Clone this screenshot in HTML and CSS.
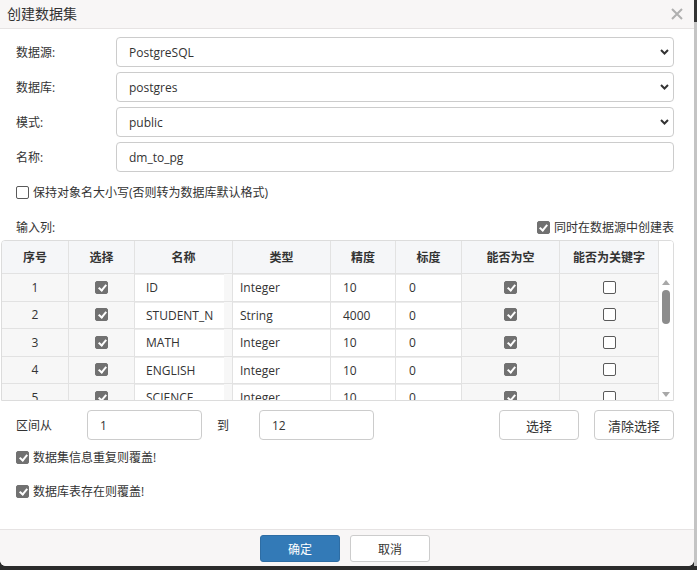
FILE: index.html
```html
<!DOCTYPE html>
<html lang="zh-CN">
<head>
<meta charset="utf-8">
<title>创建数据集</title>
<link rel="stylesheet" href="styles.css">
</head>
<body>
<div class="screen">
  <div class="dialog">
    <div class="dlg-header">
      <span class="title">创建数据集</span>
      <span class="close"><svg width="12" height="12" viewBox="0 0 12 12"><path d="M1 1L11 11M11 1L1 11" stroke="#b0b0b0" stroke-width="2" fill="none"/></svg></span>
    </div>
    <div class="dlg-body">
      <div class="form-row"><span class="lbl">数据源:</span><div class="select"><span>PostgreSQL</span><svg class="chev" width="9" height="6" viewBox="0 0 9 6"><path d="M1 1L4.5 4.5L8 1" stroke="#333" stroke-width="2" fill="none"/></svg></div></div>
      <div class="form-row"><span class="lbl">数据库:</span><div class="select"><span>postgres</span><svg class="chev" width="9" height="6" viewBox="0 0 9 6"><path d="M1 1L4.5 4.5L8 1" stroke="#333" stroke-width="2" fill="none"/></svg></div></div>
      <div class="form-row"><span class="lbl">模式:</span><div class="select"><span>public</span><svg class="chev" width="9" height="6" viewBox="0 0 9 6"><path d="M1 1L4.5 4.5L8 1" stroke="#333" stroke-width="2" fill="none"/></svg></div></div>
      <div class="form-row"><span class="lbl">名称:</span><div class="select"><span>dm_to_pg</span></div></div>

      <div class="check-line keep"><span class="cb"></span><span>保持对象名大小写(否则转为数据库默认格式)</span></div>

      <div class="cols-bar">
        <span>输入列:</span>
        <div class="check-line inline"><span class="cb on"></span><span>同时在数据源中创建表</span></div>
      </div>

      <div class="tbl">
        <div class="tbl-main">
          <div class="row head">
            <div class="c c1">序号</div><div class="c c2">选择</div><div class="c c3">名称</div><div class="c c4">类型</div><div class="c c5">精度</div><div class="c c6">标度</div><div class="c c7">能否为空</div><div class="c c8">能否为关键字</div>
          </div>
          <div class="tbody">
            <div class="row">
              <div class="c c1">1</div><div class="c c2"><span class="cb on"></span></div>
              <div class="c c3"><div class="inp name"><span class="clip">ID</span></div></div><div class="c c4"><div class="inp t">Integer</div></div>
              <div class="c c5"><div class="inp p">10</div></div><div class="c c6"><div class="inp s">0</div></div>
              <div class="c c7"><span class="cb on"></span></div><div class="c c8"><span class="cb"></span></div>
            </div>
            <div class="row">
              <div class="c c1">2</div><div class="c c2"><span class="cb on"></span></div>
              <div class="c c3"><div class="inp name"><span class="clip">STUDENT_NAME</span></div></div><div class="c c4"><div class="inp t">String</div></div>
              <div class="c c5"><div class="inp p">4000</div></div><div class="c c6"><div class="inp s">0</div></div>
              <div class="c c7"><span class="cb on"></span></div><div class="c c8"><span class="cb"></span></div>
            </div>
            <div class="row">
              <div class="c c1">3</div><div class="c c2"><span class="cb on"></span></div>
              <div class="c c3"><div class="inp name"><span class="clip">MATH</span></div></div><div class="c c4"><div class="inp t">Integer</div></div>
              <div class="c c5"><div class="inp p">10</div></div><div class="c c6"><div class="inp s">0</div></div>
              <div class="c c7"><span class="cb on"></span></div><div class="c c8"><span class="cb"></span></div>
            </div>
            <div class="row">
              <div class="c c1">4</div><div class="c c2"><span class="cb on"></span></div>
              <div class="c c3"><div class="inp name"><span class="clip">ENGLISH</span></div></div><div class="c c4"><div class="inp t">Integer</div></div>
              <div class="c c5"><div class="inp p">10</div></div><div class="c c6"><div class="inp s">0</div></div>
              <div class="c c7"><span class="cb on"></span></div><div class="c c8"><span class="cb"></span></div>
            </div>
            <div class="row">
              <div class="c c1">5</div><div class="c c2"><span class="cb on"></span></div>
              <div class="c c3"><div class="inp name"><span class="clip">SCIENCE</span></div></div><div class="c c4"><div class="inp t">Integer</div></div>
              <div class="c c5"><div class="inp p">10</div></div><div class="c c6"><div class="inp s">0</div></div>
              <div class="c c7"><span class="cb on"></span></div><div class="c c8"><span class="cb"></span></div>
            </div>
          </div>
        </div>
        <div class="scroll">
          <div class="sb-track">
            <svg class="arr" width="8" height="5" viewBox="0 0 8 5"><path d="M0 5L4 0L8 5Z" fill="#a8a8a8"/></svg>
            <div class="thumb"></div>
            <div class="sb-fill"></div>
            <svg class="arr" width="8" height="5" viewBox="0 0 8 5"><path d="M0 0L4 5L8 0Z" fill="#a8a8a8"/></svg>
          </div>
        </div>
      </div>

      <div class="range-row">
        <span class="rlbl">区间从</span>
        <div class="box">1</div>
        <span class="to">到</span>
        <div class="box">12</div>
        <span class="btn-sm first">选择</span>
        <span class="btn-sm">清除选择</span>
      </div>

      <div class="check-line over1"><span class="cb on"></span><span>数据集信息重复则覆盖!</span></div>
      <div class="check-line over2"><span class="cb on"></span><span>数据库表存在则覆盖!</span></div>
    </div>
    <div class="dlg-footer">
      <span class="btn primary">确定</span>
      <span class="btn">取消</span>
    </div>
  </div>
  <div class="side"><div class="side-top"></div><div class="side-rest"></div></div>
</div>
</body>
</html>
```
FILE: styles.css
```css
html, body {
  margin: 0;
  padding: 0;
}
body {
  background: #2b2b2b;
  font-family: "Open Sans", "Noto Sans CJK SC", sans-serif;
  font-size: 12px;
  color: #333;
  width: 697px;
  height: 570px;
  overflow: hidden;
}
.screen {
  display: flex;
  align-items: flex-start;
}
.dialog {
  width: 694px;
  height: 566px;
  background: #fff;
  border-radius: 0 0 6px 6px;
  display: flex;
  flex-direction: column;
  overflow: hidden;
}
.side {
  width: 3px;
  height: 566px;
  display: flex;
  flex-direction: column;
}
.side-top { height: 22px; background: #333; }
.side-rest { flex: 1; background: #c4c4c4; }

.dlg-header {
  height: 28px;
  flex: none;
  border-bottom: 1px solid #e6e3e3;
  background: #f8f6f6;
  display: flex;
  align-items: center;
  justify-content: space-between;
  padding: 0 11px 0 7px;
}
.title {
  font-size: 14px;
  color: #333;
  line-height: 28px;
}
.close {
  display: flex;
}

.dlg-body {
  flex: 1;
  padding: 8px 20px 0 16px;
}
.form-row {
  display: flex;
  align-items: center;
  height: 30px;
  margin-bottom: 5px;
}
.lbl {
  width: 100px;
  flex: none;
}
.select {
  flex: 1;
  height: 30px;
  box-sizing: border-box;
  border: 1px solid #ccc;
  border-radius: 4px;
  display: flex;
  align-items: center;
  justify-content: space-between;
  padding: 0 4px 0 12px;
  font-size: 12px;
}
.chev { flex: none; }

.check-line {
  display: flex;
  align-items: center;
  height: 20px;
  gap: 4px;
}
.keep { margin-top: 10px; }
.cb {
  width: 13px;
  height: 13px;
  box-sizing: border-box;
  border: 1px solid #5a5a5a;
  border-radius: 2px;
  background: #fff;
  flex: none;
  display: inline-block;
  position: relative;
}
.cb.on {
  background: #717171;
  border-color: #717171;
}
.cb.on::after {
  content: "";
  position: absolute;
  left: 3.5px;
  top: 1px;
  width: 3px;
  height: 6px;
  border: solid #fff;
  border-width: 0 2px 2px 0;
  transform: rotate(40deg);
}

.cols-bar {
  margin-top: 15px;
  height: 20px;
  display: flex;
  align-items: center;
  justify-content: space-between;
}
.check-line.inline { height: 20px; }

.tbl {
  margin-top: 3px;
  margin-left: -15px;
  width: 673px;
  height: 161px;
  box-sizing: border-box;
  border: 1px solid #dcdcdc;
  border-radius: 4px 4px 0 0;
  display: flex;
  overflow: hidden;
}
.tbl-main {
  width: 657px;
  display: flex;
  flex-direction: column;
}
.row {
  display: flex;
  height: 27.5px;
  background: #f7f7f7;
  box-sizing: border-box;
}
.row.head {
  height: 33px;
  background: #f5f6f8;
  font-weight: 700;
  flex: none;
}
.tbody {
  height: 126px;
  overflow: hidden;
}
.c {
  box-sizing: border-box;
  border-right: 1px solid #e2e2e2;
  border-bottom: 1px solid #e2e2e2;
  display: flex;
  align-items: center;
  justify-content: center;
  overflow: hidden;
}
.c1 { width: 67px; }
.c2 { width: 66px; }
.c3 { width: 98px; justify-content: flex-start; }
.c4 { width: 98px; }
.c5 { width: 65px; }
.c6 { width: 66px; }
.c7 { width: 98px; }
.c8 { width: 99px; }
.head .c { justify-content: center; }
.inp {
  background: #fff;
  height: 100%;
  box-sizing: border-box;
  border-top: 1px solid #ececec;
  display: flex;
  align-items: center;
  white-space: nowrap;
  overflow: hidden;
  width: 100%;
}
.inp.name { width: 89px; padding-left: 11px; }
.clip {
  display: block;
  max-width: 67px;
  overflow: hidden;
  white-space: nowrap;
}
.inp.t { padding-left: 7px; }
.inp.p { padding-left: 12px; }
.inp.s { padding-left: 13px; }

.scroll {
  width: 14px;
  background: #fff;
  display: flex;
  flex-direction: column;
}
.sb-track {
  margin-top: 39px;
  height: 117px;
  display: flex;
  flex-direction: column;
  align-items: center;
}
.arr { flex: none; }
.thumb {
  margin-top: 5px;
  width: 8px;
  height: 34px;
  border-radius: 4px;
  background: #8c8c8c;
}
.sb-fill { flex: 1; }

.range-row {
  margin-top: 9px;
  height: 30px;
  display: flex;
  align-items: center;
}
.rlbl { width: 71px; flex: none; }
.box {
  width: 115px;
  height: 30px;
  box-sizing: border-box;
  border: 1px solid #ccc;
  border-radius: 4px;
  display: flex;
  align-items: center;
  padding-left: 12px;
  flex: none;
}
.to {
  margin-left: 15px;
  width: 42px;
  flex: none;
}
.btn-sm {
  width: 80px;
  height: 30px;
  box-sizing: border-box;
  border: 1px solid #ccc;
  border-radius: 4px;
  display: flex;
  align-items: center;
  justify-content: center;
  font-size: 13px;
  flex: none;
}
.btn-sm.first { margin-left: auto; margin-right: 15px; }

.over1 { margin-top: 7px; }
.over2 { margin-top: 14px; }

.dlg-footer {
  height: 31px;
  flex: none;
  border-top: 1px solid #e6e3e3;
  background: #f8f6f6;
  display: flex;
  justify-content: center;
  align-items: flex-start;
  gap: 10px;
  padding: 5px 4px 0 0;
}
.btn {
  width: 80px;
  height: 27px;
  box-sizing: border-box;
  border: 1px solid #ccc;
  border-radius: 3px;
  background: #fff;
  display: flex;
  align-items: center;
  justify-content: center;
  font-size: 12px;
}
.btn.primary {
  background: #337ab7;
  border-color: #2e6da4;
  color: #fff;
}
```
